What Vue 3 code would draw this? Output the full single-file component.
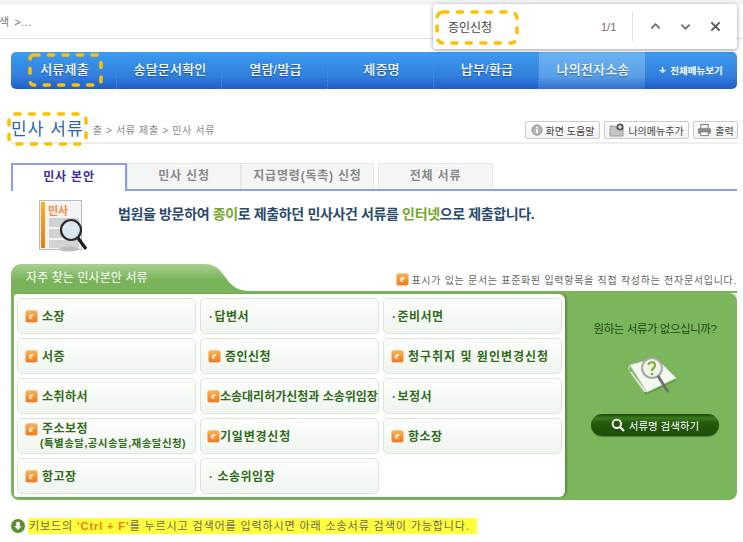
<template>
  <div class="page">
    <div class="browser-strip"></div>
    <div class="crumb-bar"><span>색</span> <span class="crumb-more">&gt;...</span></div>

    <!-- 브라우저 찾기 창 -->
    <div class="find-box">
      <span class="find-text">증인신청</span>
      <span class="find-count">1/1</span>
      <span class="find-sep"></span>
      <svg class="find-icon" viewBox="0 0 12 12"><path d="M1.5 8 L6 3.5 L10.5 8" /></svg>
      <svg class="find-icon" viewBox="0 0 12 12"><path d="M1.5 4 L6 8.5 L10.5 4" /></svg>
      <svg class="find-icon close" viewBox="0 0 12 12"><path d="M1.5 1.5 L10.5 10.5 M10.5 1.5 L1.5 10.5" /></svg>
    </div>
    <svg class="mark mark-find" width="84" height="35"><rect x="2" y="2" width="80" height="31" rx="6" /></svg>

    <nav class="gnb">
      <a
        v-for="item in menus"
        :key="item.label"
        class="gnb-item"
        :class="{ active: item.active }"
        :style="{ width: item.width + 'px' }"
      >{{ item.label }}</a>
      <a class="gnb-all"><b>+</b> 전체메뉴보기</a>
      <svg class="mark mark-menu" width="75" height="34"><rect x="2" y="2" width="71" height="30" rx="4" /></svg>
    </nav>

    <div class="title-row">
      <h1 class="title">민사 서류</h1>
      <span class="path">출 &gt; 서류 제출 &gt; 민사 서류</span>
      <svg class="mark mark-title" width="81" height="34"><rect x="2" y="2" width="77" height="30" rx="6" /></svg>
      <div class="tools">
        <button class="tool-btn help">
          <svg viewBox="0 0 14 14" width="12" height="12"><circle cx="7" cy="7" r="6" fill="#b5b5b5" stroke="#8d8d8d" /><circle cx="7" cy="4" r="1" fill="#fff" /><rect x="6" y="6" width="2" height="5" fill="#fff" /></svg>
          화면 도움말
        </button>
        <button class="tool-btn add">
          <svg viewBox="0 0 16 14" width="16" height="14"><path d="M1 3 H6 L7 5 H14 V13 H1 Z" fill="#c4c4c4" stroke="#9a9a9a" /><circle cx="11" cy="4" r="3.6" fill="#555" /><path d="M9 4 H13 M11 2 V6" stroke="#fff" stroke-width="1.2" /></svg>
          나의메뉴추가
        </button>
        <button class="tool-btn print">
          <svg viewBox="0 0 16 14" width="15" height="14"><rect x="4" y="1" width="8" height="5" fill="#eee" stroke="#777" /><rect x="1" y="5" width="14" height="6" rx="1" fill="#8b8b8b" /><rect x="4" y="9" width="8" height="4" fill="#fff" stroke="#777" /></svg>
          출력
        </button>
      </div>
    </div>

    <div class="tabs">
      <a
        v-for="tab in tabs"
        :key="tab.label"
        class="tab"
        :class="{ on: tab.on }"
        :style="{ width: tab.width + 'px', marginRight: tab.gap + 'px' }"
      >{{ tab.label }}</a>
    </div>

    <div class="intro">
      <div class="intro-icon">
        <span class="intro-bar"></span>
        <span class="intro-word">민사</span>
        <span class="intro-lines"></span>
        <svg class="intro-glass" viewBox="0 0 32 36" width="32" height="36">
          <ellipse cx="12" cy="31" rx="10" ry="2.5" fill="#bdbdbd" />
          <circle cx="14" cy="12" r="10" fill="#dce8f4" fill-opacity="0.9" stroke="#2a2a2a" stroke-width="2.2" />
          <path d="M21 20 L29 31" stroke="#1e1e1e" stroke-width="3.2" />
        </svg>
      </div>
      <p class="intro-text">법원을 방문하여 <em>종이</em>로 제출하던 민사사건 서류를 <em>인터넷</em>으로 제출합니다.</p>
    </div>

    <div class="panel-head">
      <div class="head-tab">자주 찾는 민사본안 서류</div>
      <svg class="head-curve" viewBox="0 0 46 29" width="46" height="29" preserveAspectRatio="none">
        <defs>
          <linearGradient id="headFill" x1="0" y1="0" x2="0" y2="1">
            <stop offset="0" stop-color="#a6d08e" />
            <stop offset="0.55" stop-color="#7ab45a" />
          </linearGradient>
        </defs>
        <path d="M0 0 C12 0 16 6 22 14 C28 23 35 27 46 27 V29 H0 Z" fill="url(#headFill)" />
      </svg>
      <div class="head-line"></div>
      <p class="head-note"><i class="e-icon">e</i> 표시가 있는 문서는 표준화된 입력항목을 직접 작성하는 전자문서입니다.</p>
    </div>

    <div class="panel">
      <div class="doc-area">
        <a v-for="doc in docs" :key="doc.name" class="doc" :class="doc.cls">
          <i v-if="doc.e" class="e-icon">e</i>
          <span v-else class="dot">·</span>
          <span class="doc-name">
            {{ doc.name }}
            <small v-if="doc.sub">{{ doc.sub }}</small>
          </span>
        </a>
      </div>
      <aside class="side">
        <p class="side-q">원하는 서류가 없으십니까?</p>
        <svg class="side-map" viewBox="0 0 52 42" width="52" height="42">
          <path d="M6 20 L20 41 L50 27 L48 24 Z" fill="#4f8f35" opacity="0.55" />
          <path d="M4 11 L30 4 L50 24 L21 38 Z" fill="#f4f6f0" stroke="#d3d8cc" />
          <path d="M4 11 C1 13 2 18 6 18 L21 38 L18 38 L3 17 Z" fill="#dde1d6" />
          <circle cx="26" cy="14" r="10" fill="#eef2ea" stroke="#a4a8a0" stroke-width="2" />
          <path d="M32 22 L42 38" stroke="#6e6e6e" stroke-width="2.8" />
          <path d="M22.5 11 C22.5 7 29.5 7.5 29 11.5 C28.6 14 26 14 26 17" fill="none" stroke="#7fb32a" stroke-width="2.2" />
          <circle cx="26" cy="20" r="1.3" fill="#7fb32a" />
        </svg>
        <button class="side-btn">
          <svg viewBox="0 0 14 14" width="14" height="14"><circle cx="5.8" cy="5.8" r="4.2" fill="none" stroke="#fff" stroke-width="1.9" /><path d="M9 9 L13 13" stroke="#fff" stroke-width="2.2" /></svg>
          서류명 검색하기
        </button>
      </aside>
    </div>

    <p class="foot">
      <svg viewBox="0 0 14 14" width="14" height="14"><circle cx="7" cy="7" r="7" fill="#5d8f2e" /><path d="M5.3 3 H8.7 V7 H10.6 L7 11 L3.4 7 H5.3 Z" fill="#fff" /></svg>
      <span class="foot-text">키보드의 <b>'Ctrl + F'</b>를 누르시고 검색어를 입력하시면 아래 소송서류 검색이 가능합니다.</span>
    </p>
  </div>
</template>

<script setup>
const menus = [
  { label: '서류제출', width: 106 },
  { label: '송달문서확인', width: 105 },
  { label: '열람/발급', width: 106 },
  { label: '제증명', width: 106 },
  { label: '납부/환급', width: 105 },
  { label: '나의전자소송', width: 106, active: true }
]

const tabs = [
  { label: '민사 본안', width: 116, gap: 0, on: true },
  { label: '민사 신청', width: 114, gap: 0 },
  { label: '지급명령(독촉) 신청', width: 133, gap: 4 },
  { label: '전체 서류', width: 115, gap: 0 }
]

// e 표시가 있는 문서만 전자문서
const docs = [
  { name: '소장', e: true },
  { name: '답변서' },
  { name: '준비서면' },
  { name: '서증', e: true },
  { name: '증인신청', e: true },
  { name: '청구취지 및 원인변경신청', e: true, cls: 'wide' },
  { name: '소취하서', e: true },
  { name: '소송대리허가신청과 소송위임장', e: true, cls: 'tight' },
  { name: '보정서' },
  { name: '주소보정', sub: '(특별송달,공시송달,재송달신청)', e: true, cls: 'two' },
  { name: '기일변경신청', e: true, cls: 'close' },
  { name: '항소장', e: true },
  { name: '항고장', e: true },
  { name: '소송위임장', cls: 'spaced' }
]
</script>

<style>
html, body {
  margin: 0;
  background: #fff;
  overflow: hidden;
}
</style>

<style scoped>
.page {
  position: relative;
  width: 743px;
  height: 542px;
  overflow: hidden;
  font-family: "Liberation Sans", "Noto Sans CJK KR", sans-serif;
  color: #555;
}

.browser-strip {
  height: 5px;
  background: #f1f3f4;
}

.crumb-bar {
  height: 33px;
  line-height: 34px;
  border-bottom: 1px solid #e0e0e0;
  margin-left: -1px;
  font-size: 11px;
  color: #777;
}
.crumb-more {
  margin-left: 2px;
  letter-spacing: 0.5px;
}

.find-box {
  position: absolute;
  left: 433px;
  top: 4px;
  width: 304px;
  height: 45px;
  display: flex;
  align-items: center;
  background: #fff;
  border-radius: 3px;
  box-shadow: 0 1px 4px rgba(0, 0, 0, 0.4);
  z-index: 5;
}
.find-text {
  margin-left: 15px;
  width: 153px;
  font-size: 12px;
  color: #444;
}
.find-count {
  width: 31px;
  font-size: 11px;
  color: #7a6a6a;
}
.find-sep {
  width: 1px;
  height: 29px;
  background: #e0e0e0;
  margin-right: 17px;
}
.find-icon {
  width: 11px;
  height: 11px;
  margin-right: 19px;
  fill: none;
  stroke: #666;
  stroke-width: 1.8;
}
.find-icon.close {
  stroke-width: 2;
  stroke: #555;
  margin-right: 0;
}

.mark {
  position: absolute;
  z-index: 6;
  fill: none;
  stroke: #ffc000;
  stroke-width: 3.5;
  stroke-linecap: round;
  stroke-dasharray: 5 9.5;
}
.mark-find {
  left: 435px;
  top: 10px;
}
.mark-menu {
  left: 17px;
  top: 1px;
}
.mark-title {
  left: -4px;
  top: 0;
}

.gnb {
  position: relative;
  display: flex;
  width: 726px;
  height: 37px;
  margin: 13px 0 0 11px;
  border-radius: 5px;
  background: linear-gradient(#3c9cf0, #327fdc 65%, #1c5ec8);
}
.gnb-item {
  box-sizing: border-box;
  padding-left: 2px;
  text-align: center;
  line-height: 36px;
  font-size: 13px;
  font-weight: 500;
  letter-spacing: 0.2px;
  color: #fff;
  border-right: 1px dotted #4f8ed8;
  text-shadow: 0 1px 1px rgba(0, 40, 110, 0.5);
}
.gnb-item.active {
  border-right: 0;
  background: linear-gradient(#6ab4f4, #5a9fe6 65%, #2f6fd0);
}
.gnb-all {
  flex: 1;
  text-align: center;
  line-height: 36px;
  font-size: 9.5px;
  font-weight: 700;
  color: #fff;
}
.gnb-all b {
  font-size: 11px;
  margin-right: 2px;
}

.title-row {
  position: relative;
  display: flex;
  align-items: flex-end;
  height: 30px;
  margin: 23px 5px 0 11px;
  border-bottom: 2px solid #eee;
}
.title {
  margin: 0 0 2px 0;
  font-size: 17px;
  line-height: 20px;
  font-weight: 400;
  letter-spacing: 1.1px;
  color: #2b62ad;
}
.path {
  margin: 0 0 5px 9px;
  font-size: 10px;
  letter-spacing: 0.65px;
  color: #888;
}
.tools {
  margin: 0 0 3px auto;
  display: flex;
  gap: 4px;
}
.tool-btn {
  display: flex;
  align-items: center;
  justify-content: center;
  gap: 3px;
  height: 18px;
  padding: 0;
  font: 10px "Liberation Sans", "Noto Sans CJK KR", sans-serif;
  color: #444;
  border: 1px solid #ccc;
  border-radius: 2px;
  background: linear-gradient(#fff, #f1f1f1);
}
.help { width: 75px; }
.add { width: 85px; }
.print { width: 45px; }

.tabs {
  display: flex;
  height: 26px;
  margin: 19px 6px 0 11px;
  border-bottom: 2px solid #8c9fe8;
}
.tab {
  box-sizing: border-box;
  height: 26px;
  line-height: 25px;
  text-align: center;
  font-size: 12px;
  font-weight: 700;
  letter-spacing: 0.8px;
  color: #888;
  background: #f4f6f6;
  border: 1px solid #e6e6e6;
  border-bottom: 0;
}
.tab.on {
  height: 28px;
  color: #3a2f9c;
  background: #fff;
  border: 2px solid #8c9fe8;
  border-bottom: 0;
}

.intro {
  display: flex;
  height: 73px;
  padding: 9px 0 0 39px;
  box-sizing: border-box;
}
.intro-icon {
  position: relative;
  flex: none;
  box-sizing: border-box;
  width: 43px;
  height: 50px;
  background: #f4f4f4;
  border: 1px solid #bbb;
}
.intro-bar {
  position: absolute;
  left: 1px;
  top: 1px;
  bottom: 1px;
  width: 4px;
  background: linear-gradient(#ffb01e, #ea7a14);
}
.intro-word {
  position: absolute;
  left: 8px;
  top: 1px;
  font-size: 11px;
  font-weight: 700;
  color: #f58a3c;
}
.intro-lines {
  position: absolute;
  left: 9px;
  top: 17px;
  width: 30px;
  height: 30px;
  background: repeating-linear-gradient(#d2d2d2 0 9px, #f4f4f4 9px 11px);
}
.intro-glass {
  position: absolute;
  left: 17px;
  top: 17px;
}
.intro-text {
  margin: 4px 0 0 36px;
  font-size: 14px;
  line-height: 20px;
  font-weight: 700;
  letter-spacing: -0.36px;
  white-space: nowrap;
  color: #2b4a6e;
}
.intro-text em {
  font-style: normal;
  color: #74a830;
}

.panel-head {
  position: relative;
  display: flex;
  height: 29px;
  margin: 0 6px 0 11px;
}
.head-tab {
  width: 193px;
  padding-left: 15px;
  box-sizing: border-box;
  line-height: 29px;
  font-size: 12px;
  letter-spacing: 0.1px;
  color: #fff;
  border-radius: 10px 0 0 0;
  background: linear-gradient(#a6d08e, #7ab45a 55%);
}
.head-curve {
  display: block;
  flex: none;
}
.head-line {
  align-self: flex-end;
  flex: 1;
  height: 2px;
  background: #7ab45a;
}
.head-note {
  position: absolute;
  right: 0;
  top: 8px;
  margin: 0;
  display: flex;
  align-items: center;
  gap: 3px;
  font-size: 10px;
  letter-spacing: 0.72px;
  white-space: nowrap;
  color: #666;
}

.e-icon {
  flex: none;
  display: inline-block;
  width: 11px;
  height: 11px;
  text-align: center;
  border-radius: 1px;
  font: italic 700 10px/10px "Liberation Serif", serif;
  color: #fff;
  background: linear-gradient(#f9b24c, #ee7a1e);
  box-shadow: 0 0 0 0.5px #e59a4e;
}

.panel {
  display: flex;
  width: 726px;
  height: 207px;
  margin-left: 11px;
  box-sizing: border-box;
  padding: 1px 0 3px 3px;
  background: #7cb65c;
  border-radius: 0 8px 8px 8px;
}
.doc-area {
  width: 551px;
  box-sizing: border-box;
  padding: 4px 4px 0 3px;
  display: grid;
  grid-template-columns: 179px 179px 179px;
  grid-auto-rows: 36px;
  column-gap: 4px;
  row-gap: 4px;
  background: #fff;
  border-radius: 3px 6px 6px 3px;
  box-shadow: 2px 0 2px rgba(60, 110, 40, 0.55);
}
.doc {
  display: flex;
  align-items: center;
  box-sizing: border-box;
  padding: 1px 0 0 8px;
  border: 1px solid #d9e6d4;
  border-radius: 5px;
  background: linear-gradient(#fdfefd, #eff5ef);
  font-size: 12px;
  font-weight: 700;
  letter-spacing: 0.5px;
  color: #2f6a18;
}
.doc .e-icon {
  margin-right: 5px;
}
.dot {
  margin-right: 1px;
  color: #666;
}
.doc.wide {
  letter-spacing: 1px;
}
.doc.tight {
  padding-left: 7px;
  letter-spacing: 0;
}
.doc.tight .e-icon,
.doc.close .e-icon {
  margin-right: 1px;
}
.doc.close {
  padding-left: 7px;
  letter-spacing: 0.8px;
}
.doc.spaced .dot {
  margin-right: 4px;
}
.doc.two {
  align-items: flex-start;
  padding-top: 2px;
}
.doc.two .e-icon {
  margin-top: 3px;
}
.doc small {
  display: block;
  margin-left: -2px;
  font-size: 10.5px;
  line-height: 13px;
  letter-spacing: 0.45px;
  white-space: nowrap;
}
.doc-name {
  line-height: 16px;
  white-space: nowrap;
}

.side {
  flex: 1;
  display: flex;
  flex-direction: column;
  align-items: center;
  padding-left: 8px;
}
.side-q {
  margin: 27px 0 0;
  font-size: 11.5px;
  line-height: 16px;
  letter-spacing: -0.45px;
  color: #234a12;
}
.side-map {
  margin: 17px 6px 0 0;
}
.side-btn {
  display: flex;
  align-items: center;
  justify-content: center;
  gap: 4px;
  width: 128px;
  height: 22px;
  margin: 18px 0 0;
  padding: 0;
  border: 0;
  border-radius: 11px;
  font: 10.5px "Liberation Sans", "Noto Sans CJK KR", sans-serif;
  color: #fff;
  background: linear-gradient(#1b4607, #3c7a20 18%, #245a0c 40%, #1c4e08);
  box-shadow: 0 1px 1px rgba(40, 80, 20, 0.5);
}

.foot {
  display: flex;
  align-items: center;
  gap: 3px;
  margin: 18px 0 0 11px;
}
.foot-text {
  height: 16px;
  line-height: 16px;
  padding: 0 7px 0 1px;
  font-size: 11px;
  letter-spacing: 0.9px;
  color: #666;
  background: #ffff3c;
  white-space: nowrap;
}
.foot-text b {
  font-weight: 700;
  color: #f07a1a;
}
</style>
